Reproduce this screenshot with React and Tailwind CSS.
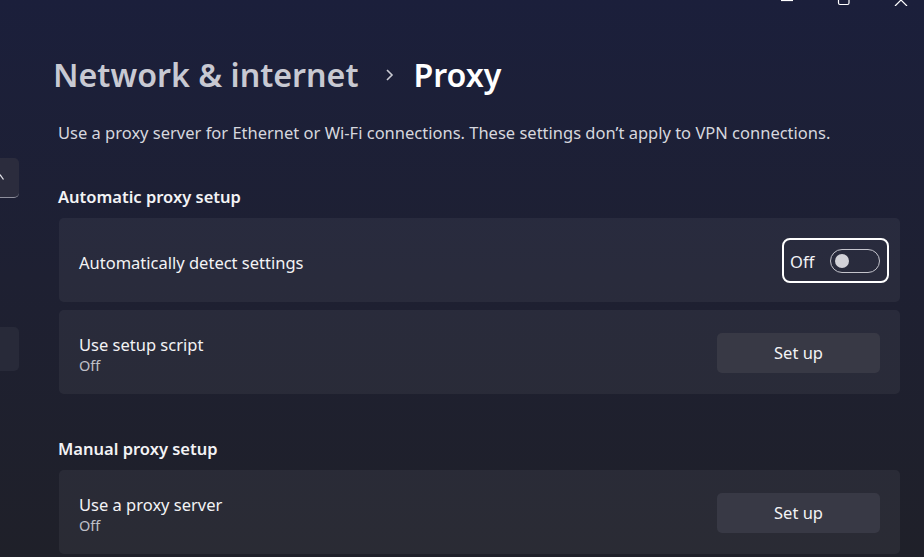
import React from "react";

const font = { fontFamily: '"Noto Sans", "Open Sans", sans-serif' };

function Card({ title, sub, children, className = "" }) {
  return (
    <div className={`flex h-[84px] items-center justify-between rounded-[5px] bg-white/[0.05] pl-[20px] pr-[20px] ${className}`}>
      <div className={`flex flex-col ${sub ? "translate-y-[2px]" : "translate-y-[3px]"}`}>
        <span className="text-[16.5px] leading-[22px] text-[#f3f3f5]">{title}</span>
        {sub && <span className="text-[14.5px] leading-[19px] text-[#bfc0c8]">{sub}</span>}
      </div>
      {children}
    </div>
  );
}

function SetupButton() {
  return (
    <button className="flex h-[40px] w-[163px] translate-y-[1px] items-center justify-center rounded-[5px] bg-[#383945] text-[16.5px] text-[#f3f3f5]">
      Set up
    </button>
  );
}

export default function App() {
  return (
    <div style={font} className="flex h-[557px] w-[924px] flex-col overflow-hidden bg-gradient-to-b from-[#1b1f3b] via-[#1e2032] to-[#1f2029]">
      <div className="flex h-[6px] shrink-0 justify-end pr-[9px]">
        <svg width="140" height="6" viewBox="0 0 140 6" fill="none" stroke="#ffffff" strokeWidth="1.2">
          <line x1="6" y1="0.5" x2="18" y2="0.5" />
          <rect x="63.5" y="-6" width="10.5" height="10.5" rx="1.5" />
          <line x1="120" y1="-6" x2="132" y2="6" />
          <line x1="132" y1="-6" x2="120" y2="6" />
        </svg>
      </div>
      <div className="flex flex-1">
        <div className="flex w-[19px] shrink-0 flex-col pt-[152px]">
          <div className="flex h-[40px] items-center rounded-r-[5px] border-b border-[#8e8f9c] bg-[#2b2c3d]">
            <svg width="5" height="10" viewBox="0 0 5 10" fill="none" stroke="#e0e0e6" strokeWidth="1.3">
              <line x1="0" y1="1.5" x2="3.5" y2="6.5" />
            </svg>
          </div>
          <div className="mt-[129px] h-[44px] rounded-r-[5px] bg-[#282a39]" />
        </div>
        <div className="flex flex-1 flex-col pl-[40px] pr-[24px]">
          <div className="mt-[46px] flex items-center text-[32.2px] font-semibold leading-[46px]">
            <span className="-ml-[6px] text-[#c8c9d2]">Network &amp; internet</span>
            <svg className="ml-[26px] mr-[19px]" width="10" height="14" viewBox="0 0 10 14" fill="none" stroke="#c8c9d2" strokeWidth="1.6">
              <polyline points="2,2 7,7 2,12" />
            </svg>
            <span className="text-white">Proxy</span>
          </div>
          <p className="mt-[23px] -ml-[1px] text-[16.5px] leading-[24px] text-[#d6d7de]">
            Use a proxy server for Ethernet or Wi-Fi connections. These settings don’t apply to VPN connections.
          </p>
          <h2 className="mt-[40px] -ml-[1px] text-[16.5px] font-semibold leading-[24px] text-[#f3f3f5]">Automatic proxy setup</h2>
          <Card title="Automatically detect settings" className="mt-[9px]">
            <div className="-mr-[9px] flex h-[45px] w-[107px] items-center rounded-[8px] border-2 border-white pl-[6px]">
              <span className="translate-y-[2px] text-[16.5px] text-[#f3f3f5]">Off</span>
              <div className="ml-[16px] flex h-[24px] w-[50px] shrink-0 translate-y-[1px] items-center rounded-full border border-[#c4c4cc] pl-[4px]">
                <div className="h-[14px] w-[14px] rounded-full bg-[#d2d2d8]" />
              </div>
            </div>
          </Card>
          <Card title="Use setup script" sub="Off" className="mt-[8px]">
            <SetupButton />
          </Card>
          <h2 className="mt-[43px] -ml-[1px] text-[16.5px] font-semibold leading-[24px] text-[#f3f3f5]">Manual proxy setup</h2>
          <Card title="Use a proxy server" sub="Off" className="mt-[9px]">
            <SetupButton />
          </Card>
        </div>
      </div>
    </div>
  );
}
